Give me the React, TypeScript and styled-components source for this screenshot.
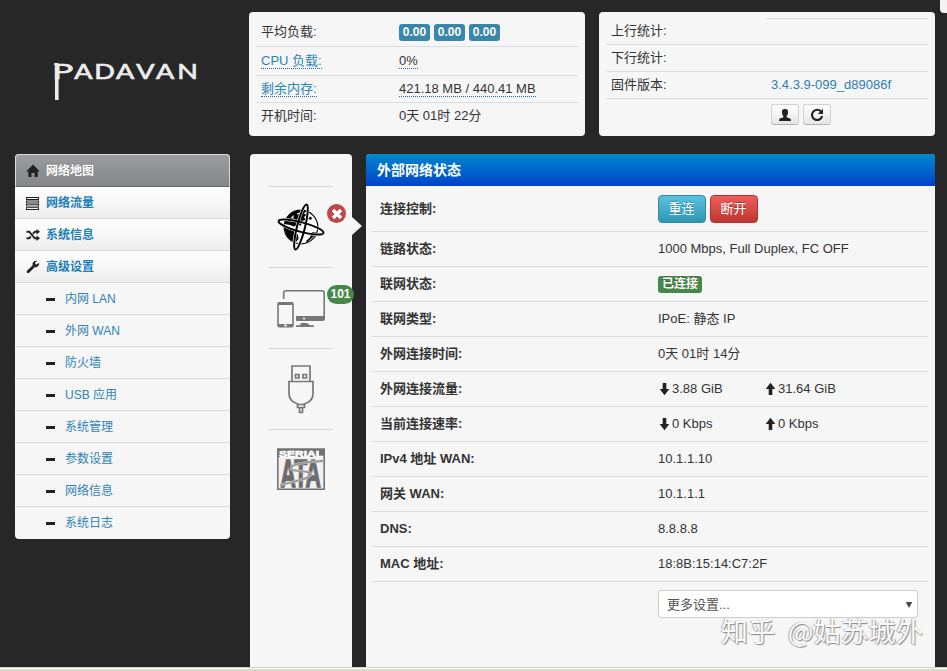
import React from 'react';
import styled, { createGlobalStyle, css } from 'styled-components';

const GlobalStyle = createGlobalStyle`
  * { box-sizing: border-box; }
  html, body { margin: 0; height: 100%; overflow: hidden; background: #272727; }
  body, button {
    font-family: "Liberation Sans", "Noto Sans CJK SC", sans-serif;
    font-size: 13px;
    color: #333;
  }
  button { margin: 0; padding: 0; }
`;

const Page = styled.div`
  position: relative;
  width: 947px;
  height: 671px;
  display: flex;
  flex-direction: column;
  background: #272727;
  overflow: hidden;
`;

const CornerTab = styled.div`
  position: absolute;
  top: 0;
  right: 0;
  width: 7px;
  height: 13px;
  background: #f4f2f2;
  border-bottom-left-radius: 4px;
`;

const Header = styled.header`
  display: grid;
  grid-template-columns: 249px 336px 336px;
  column-gap: 0;
  height: 142px;
  padding-top: 12px;
  & > :last-child { margin-left: 14px; margin-right: -14px; }
`;

const LogoBox = styled.div`
  padding: 42px 0 0 48px;
`;

const Card = styled.section`
  height: 124px;
  padding: 6px 7px 0;
  background: #f6f6f6;
  border-radius: 4px;
`;

const StatRow = styled.div<{ $h: number; $line?: boolean; $label?: number }>`
  display: grid;
  grid-template-columns: ${p => p.$label ?? 138}px 1fr;
  align-items: center;
  height: ${p => p.$h}px;
  padding: 0 0 1px 5px;
  line-height: 16px;
  border-bottom: ${p => (p.$line === false ? 'none' : '1px solid #dcdcdc')};
`;

const TopRule = styled.div`
  height: 1px;
  margin-left: 160px;
  background: #dcdcdc;
`;

const Hint = styled.span<{ $link?: boolean }>`
  display: inline-block;
  height: 17px;
  line-height: 18px;
  color: ${p => (p.$link ? '#2a85b8' : '#333')};
  border-bottom: 1px dotted #27699c;
`;

const Badges = styled.div`
  display: flex;
  gap: 4px;
  padding-top: 1px;
`;

const Badge = styled.span<{ $ok?: boolean }>`
  display: inline-block;
  width: ${p => (p.$ok ? 44 : 31)}px;
  height: 17px;
  text-align: center;
  white-space: nowrap;
  border-radius: 3px;
  color: #fff;
  font-size: 12px;
  font-weight: bold;
  line-height: 17px;
  background: ${p => (p.$ok ? '#468847' : '#3a87ad')};
  text-shadow: 0 -1px 0 rgba(0, 0, 0, 0.25);
`;

const FirmwareLink = styled.a`
  color: #2a80b5;
`;

const IconButtons = styled.div`
  display: flex;
  gap: 4px;
  padding: 5px 0 0 165px;
`;

const IconButton = styled.button`
  display: flex;
  align-items: center;
  justify-content: center;
  width: 28px;
  height: 21px;
  border: 1px solid #d0d0d0;
  border-bottom-color: #b3b3b3;
  border-radius: 3px;
  background: linear-gradient(#fff, #e6e6e6);
  color: #222;
`;

const Body = styled.div`
  flex: 1;
  display: flex;
  padding: 12px 12px 0 15px;
  min-height: 0;
`;

const Sidebar = styled.nav`
  width: 215px;
  height: 385px;
  margin-right: 20px;
  border-radius: 4px;
  overflow: hidden;
  background: #f6f6f6;
`;

const MenuItem = styled.a<{ $active?: boolean }>`
  display: flex;
  align-items: center;
  height: 32px;
  padding: 0 0 0 11px;
  gap: 6px;
  font-size: 12px;
  font-weight: bold;
  color: #1b7fb8;
  background: linear-gradient(#fff, #efeded);
  border-bottom: 1px solid #dcdcdc;
  ${p => p.$active && css`
    height: 33px;
    color: #fff;
    background: linear-gradient(#9a9ca0, #848689);
    border: 1px solid #d8d8d8;
    border-bottom-color: #68696c;
    border-radius: 4px 4px 0 0;
    padding-left: 10px;
    text-shadow: 0 -1px 0 rgba(0, 0, 0, 0.2);
  `}
  svg { width: 14px; height: 14px; color: #222; }
  span { padding-bottom: 2px; }
`;

const SubItem = styled.a`
  display: flex;
  align-items: center;
  height: 32px;
  padding: 0 0 2px 31px;
  gap: 10px;
  font-size: 12px;
  color: #2f83b6;
  border-bottom: 1px solid #dcdcdc;
  &::before { content: ''; width: 9px; height: 3px; margin-top: 3px; background: #222; }
  &:last-child { border-bottom-color: transparent; }
`;

const Strip = styled.div`
  position: relative;
  width: 102px;
  height: 513px;
  margin-right: 14px;
  padding: 32px 19px 0;
  border-radius: 4px 4px 0 0;
  background: #f6f6f6;
`;

const Device = styled.div`
  position: relative;
  height: 81px;
  padding: 16px 0 0 8px;
  border-top: 1px solid #d5d5d5;
  svg { display: block; overflow: visible; }
`;

const Bubble = styled.span<{ $kind: 'error' | 'count' }>`
  position: absolute;
  left: 58px;
  top: 17px;
  display: flex;
  align-items: center;
  justify-content: center;
  width: ${p => (p.$kind === 'error' ? 19 : 27)}px;
  height: 19px;
  padding-bottom: ${p => (p.$kind === 'error' ? 0 : 1)}px;
  border-radius: 10px;
  color: #fff;
  font-size: 12px;
  font-weight: bold;
  background: ${p => (p.$kind === 'error' ? '#b94a48' : '#468847')};
`;

const Pointer = styled.div`
  position: absolute;
  left: 102px;
  top: 63px;
  border: 9px solid transparent;
  border-left: 10px solid #f6f6f6;
  border-right: none;
`;

const Panel = styled.main`
  width: 569px;
  height: 513px;
  background: #f6f6f6;
  border-radius: 4px 4px 0 0;
`;

const PanelTitle = styled.h1`
  height: 32px;
  margin: 0;
  padding-left: 11px;
  border-radius: 4px 4px 0 0;
  font-size: 14px;
  line-height: 32px;
  color: #fff;
  background: linear-gradient(#0088cc, #0044cc);
`;

const Table = styled.div`
  padding: 0 7px 0 6px;
`;

const Row = styled.div<{ $h?: number; $last?: boolean }>`
  display: grid;
  grid-template-columns: 278px 1fr;
  align-items: center;
  height: ${p => p.$h ?? 35}px;
  padding-left: 8px;
  line-height: 18px;
  border-bottom: ${p => (p.$last ? 'none' : '1px solid #dcdcdc')};
`;

const Label = styled.b`
  color: #333;
`;

const Traffic = styled.div`
  display: grid;
  grid-template-columns: 106px 1fr;
`;

const Rate = styled.span`
  display: flex;
  align-items: center;
  gap: 1px;
`;

const Actions = styled.div`
  display: flex;
  gap: 4px;
`;

const ActionButton = styled.button<{ $danger?: boolean }>`
  width: 48px;
  height: 28px;
  padding-right: 1px;
  border: 1px solid ${p => (p.$danger ? '#b5332e' : '#3189a6')};
  border-radius: 4px;
  color: #fff;
  line-height: 24px;
  text-shadow: 0 -1px 0 rgba(0, 0, 0, 0.25);
  background: ${p => (p.$danger ? 'linear-gradient(#ee5f5b, #bd362f)' : 'linear-gradient(#5bc0de, #2f96b4)')};
`;

const Select = styled.div`
  display: flex;
  align-items: center;
  justify-content: space-between;
  width: 260px;
  height: 28px;
  padding: 1px 4px 0 8px;
  border: 1px solid #ccc;
  border-radius: 3px;
  background: #fff;
  color: #555;
`;

const Watermark = styled.div`
  position: absolute;
  left: 721px;
  top: 611px;
  font-family: "Noto Sans CJK SC", sans-serif;
  font-size: 27px;
  line-height: 40px;
  word-spacing: 6px;
  letter-spacing: 0.3px;
  white-space: nowrap;
  color: #fafafa;
  text-shadow: 1px 1px 1px #888, -1px 0 1px #aaa;
`;

const StatusEdge = styled.footer`
  height: 4px;
  flex: none;
  border-top: 1px solid #cfd0c6;
  background: linear-gradient(#fff 1px, #d8d8cc 1px);
`;

const Logo = () => (
  <svg
    width="160"
    height="52"
    viewBox="48 54 160 52"
    fill="#ececec"
    stroke="#ececec"
    strokeWidth="0.7"
    fontFamily="Lato, sans-serif"
    fontSize="21.6"
  >
    <text transform="translate(52.2 79) scale(1.62 1)">P</text>
    <text transform="scale(1.25 1)" y="79" x="59.5 75.4 92.9 109 124.9 141.9">ADAVAN</text>
    <g stroke="none">
      <rect x="55" y="63.2" width="3.6" height="36.8" />
      <rect x="54" y="63.2" width="4" height="1.8" />
    </g>
  </svg>
);

const UserIcon = () => (
  <svg width="14" height="14" viewBox="0 0 14 14" fill="currentColor">
    <path d="M7 1C4.3 1 3.8 2.5 4 4.5 4 6.2 4.7 7.4 5.4 8V9.3L2 10.6Q1 11 1 13H13Q13 11 12 10.6L8.6 9.3V8C9.3 7.4 10 6.2 10 4.5 10.2 2.5 9.7 1 7 1Z" />
  </svg>
);

const ReloadIcon = () => (
  <svg width="14" height="14" viewBox="0 0 14 14">
    <path d="M11 3.6A5.1 5.1 0 1 0 12.1 8" fill="none" stroke="currentColor" strokeWidth="2.1" />
    <path d="M13 .8V6H7.8Z" fill="currentColor" />
  </svg>
);

const HomeIcon = () => (
  <svg viewBox="0 0 14 14" fill="currentColor">
    <path d="M7 .5 13.8 7.5H11.8V13H8.6V9H5.5V13H2.3V7.5H.2Z" />
  </svg>
);

const ListIcon = () => (
  <svg viewBox="0 0 14 14" fill="currentColor">
    <path fillRule="evenodd" d="M0 1H13V4H0ZM0 4.6H13V7.4H0ZM0 8H13V10.6H0ZM0 11.2H13V14H0ZM1 2V3H12V2ZM1 5.5V6.5H12V5.5ZM1 8.8V9.8H12V8.8ZM1 12V13H12V12Z" />
  </svg>
);

const ShuffleIcon = () => (
  <svg viewBox="0 0 14 14" fill="none" stroke="currentColor" strokeWidth="1.9">
    <path d="M.5 3.7H3.2L8.8 10.3H11M.5 10.3H3.2L4.8 8.5M6.9 5.8 8.8 3.7H11" />
    <path d="M10.5 1 14 3.7 10.5 6.4ZM10.5 7.6 14 10.3 10.5 13Z" fill="currentColor" stroke="none" />
  </svg>
);

const WrenchIcon = () => (
  <svg viewBox="0 0 14 14" fill="currentColor">
    <path d="M13 2.8 10.9 4.5 9.4 3.9 9.2 2.5 11.2 .9C9.4.4 7.5 1.2 6.8 2.7 6.4 3.6 6.4 4.4 6.7 5.2L1.2 10.6C.6 11.2.6 12.1 1.1 12.7S2.6 13.3 3.2 12.7L8.6 7.2C11 7.8 13.8 5.8 13 2.8Z" />
  </svg>
);

const Arrow = ({ up }: { up?: boolean }) => (
  <svg width="13" height="14" viewBox="0 0 13 14" fill="#222">
    {up ? <path d="M6.5 .8 11.3 7H8.3V13H4.7V7H1.7Z" /> : <path d="M6.5 13.2 11.3 7H8.3V1H4.7V7H1.7Z" />}
  </svg>
);

const GlobeIcon = () => (
  <svg width="48" height="48" viewBox="0 0 48 48">
    <circle cx="24" cy="24" r="16.8" fill="#fafafa" stroke="#050505" strokeWidth="1.2" />
    <path d="M7.4 21C8 12 16 6.8 24 7.2L29 8.2 27 10.5 29.5 12 27 14 28.5 17 25 18 24 22.5 20 22 17 23.5 13 22ZM7.3 24 13 27 17 27.5 21 32 21.5 36 18.5 39.6Q8 36 7.3 24Z" fill="#050505" />
    <path d="M35 29 39 29.5 36 34 30 39.5 29 38 33 34.5ZM31 15 34 13.5 35 16 33 17Z" fill="#050505" />
    <path d="M14 14.5 17 12 16.2 16.5ZM20 10 23.5 9.8 20.5 12ZM19 18 22 15.5 22 18Z" fill="#e5e5e5" />
    <g fill="none" stroke="#fafafa" strokeWidth="3">
      <ellipse cx="24" cy="24" rx="23.2" ry="4.8" transform="rotate(15 24 24)" />
      <ellipse cx="24" cy="24" rx="4" ry="23.2" transform="rotate(14 24 24)" />
    </g>
    <g fill="none" stroke="#050505" strokeWidth="2">
      <ellipse cx="24" cy="24" rx="23.2" ry="4.8" transform="rotate(15 24 24)" />
      <ellipse cx="24" cy="24" rx="4" ry="23.2" transform="rotate(14 24 24)" />
    </g>
  </svg>
);

const DevicesIcon = () => (
  <svg width="48" height="48" viewBox="0 0 48 48" fill="#777">
    <path d="M6.7 15V9Q6.7 6.7 9 6.7H45Q47.2 6.7 47.2 9V34" fill="none" stroke="#777" strokeWidth="1.6" />
    <path d="M19 32H48V35Q48 37 46 37H19ZM24 39H30L33 41.3H37V43H19V41.3H23Z" />
    <rect x="1" y="18.7" width="15" height="24" rx="1.5" fill="#f6f6f6" stroke="#777" strokeWidth="1.6" />
    <path d="M1 18.5H16V21H1ZM1 40H16V43H1Z" />
    <circle cx="8.5" cy="41.4" r="1.2" fill="#f6f6f6" />
    <circle cx="27" cy="34.5" r="1.1" fill="#f6f6f6" />
  </svg>
);

const UsbIcon = () => (
  <svg width="48" height="48" viewBox="0 0 48 48" fill="none" stroke="#777" strokeWidth="1.7">
    <path d="M15 16V1H33V16M12 16.5H36V29Q36 36.5 26 39.5H22Q12 36.5 12 29ZM20.5 39.5V42.5H27.5V39.5M22.5 43V47.5H25.5V43" />
    <path d="M18.5 9.5H22V13H18.5ZM26 9.5H29.5V13H26Z" />
  </svg>
);

const SataIcon = () => (
  <svg width="48" height="48" viewBox="0 0 48 48">
    <path d="M.8 3H47.2V43.2H.8Z" fill="#f1f1f1" stroke="#737373" strokeWidth="1.6" />
    <rect x="1" y="3" width="46" height="8" fill="#737373" />
    <text x="2" y="10.6" textLength="44" lengthAdjust="spacingAndGlyphs" fontSize="9.6" fontWeight="bold" fill="#fff" stroke="#fff" strokeWidth=".6">SERIAL</text>
    <text transform="translate(3.5 41) scale(.73 1.32)" fontSize="29" fontWeight="bold" fill="#6c6c6c" stroke="#6c6c6c" strokeWidth="1.2">ATA</text>
    <path d="M46 15C28 16 13 18 14 23 15 26 34 24 34 28 34 33 18 35 3 39" fill="none" stroke="#ddd" strokeWidth="2.4" />
    <path d="M46 15C28 16 13 18 14 23 15 26 34 24 34 28 34 33 18 35 3 39" fill="none" stroke="#989898" strokeWidth="1.8" />
  </svg>
);

const CrossIcon = () => (
  <svg width="12" height="12" viewBox="0 0 12 12">
    <path d="M2 2 10 10M10 2 2 10" stroke="#fff" strokeWidth="3.4" />
  </svg>
);

const menu = [
  { text: '网络地图', Icon: HomeIcon, active: true },
  { text: '网络流量', Icon: ListIcon },
  { text: '系统信息', Icon: ShuffleIcon },
  { text: '高级设置', Icon: WrenchIcon },
];
const submenu = ['内网 LAN', '外网 WAN', '防火墙', 'USB 应用', '系统管理', '参数设置', '网络信息', '系统日志'];

const TrafficValue = ({ down, up }: { down: string; up: string }) => (
  <Traffic>
    <Rate><Arrow />{down}</Rate>
    <Rate><Arrow up />{up}</Rate>
  </Traffic>
);

const status: { label: string; value: React.ReactNode }[] = [
  { label: '链路状态:', value: '1000 Mbps, Full Duplex, FC OFF' },
  { label: '联网状态:', value: <Badge $ok>已连接</Badge> },
  { label: '联网类型:', value: 'IPoE: 静态 IP' },
  { label: '外网连接时间:', value: '0天 01时 14分' },
  { label: '外网连接流量:', value: <TrafficValue down="3.88 GiB" up="31.64 GiB" /> },
  { label: '当前连接速率:', value: <TrafficValue down="0 Kbps" up="0 Kbps" /> },
  { label: 'IPv4 地址 WAN:', value: '10.1.1.10' },
  { label: '网关 WAN:', value: '10.1.1.1' },
  { label: 'DNS:', value: '8.8.8.8' },
  { label: 'MAC 地址:', value: '18:8B:15:14:C7:2F' },
];

export default function App() {
  return (
    <Page>
      <GlobalStyle />
      <CornerTab />
      <Header>
        <LogoBox><Logo /></LogoBox>
        <Card>
          <StatRow $h={29}>
            <span>平均负载:</span>
            <Badges><Badge>0.00</Badge><Badge>0.00</Badge><Badge>0.00</Badge></Badges>
          </StatRow>
          <StatRow $h={29}>
            <span><Hint $link>CPU 负载:</Hint></span>
            <span><Hint>0%</Hint></span>
          </StatRow>
          <StatRow $h={27}>
            <span><Hint $link>剩余内存:</Hint></span>
            <span><Hint>421.18 MB / 440.41 MB</Hint></span>
          </StatRow>
          <StatRow $h={26} $line={false}>
            <span>开机时间:</span>
            <span>0天 01时 22分</span>
          </StatRow>
        </Card>
        <Card>
          <TopRule />
          <StatRow $h={26} $label={160}><span>上行统计:</span></StatRow>
          <StatRow $h={27} $label={160}><span>下行统计:</span></StatRow>
          <StatRow $h={27} $label={160}>
            <span>固件版本:</span>
            <FirmwareLink>3.4.3.9-099_d89086f</FirmwareLink>
          </StatRow>
          <IconButtons>
            <IconButton><UserIcon /></IconButton>
            <IconButton><ReloadIcon /></IconButton>
          </IconButtons>
        </Card>
      </Header>
      <Body>
        <Sidebar>
          {menu.map(({ text, Icon, active }) => (
            <MenuItem key={text} $active={active}><Icon /><span>{text}</span></MenuItem>
          ))}
          {submenu.map(text => <SubItem key={text}>{text}</SubItem>)}
        </Sidebar>
        <Strip>
          <Device><GlobeIcon /><Bubble $kind="error"><CrossIcon /></Bubble></Device>
          <Device><DevicesIcon /><Bubble $kind="count">101</Bubble></Device>
          <Device><UsbIcon /></Device>
          <Device><SataIcon /></Device>
          <Pointer />
        </Strip>
        <Panel>
          <PanelTitle>外部网络状态</PanelTitle>
          <Table>
            <Row $h={46}>
              <Label>连接控制:</Label>
              <Actions>
                <ActionButton>重连</ActionButton>
                <ActionButton $danger>断开</ActionButton>
              </Actions>
            </Row>
            {status.map(({ label, value }) => (
              <Row key={label}><Label>{label}</Label><div>{value}</div></Row>
            ))}
            <Row $h={44} $last>
              <span />
              <Select>
                <span>更多设置...</span>
                <svg width="8" height="8" viewBox="0 0 8 8"><path d="M.8 1H7.2L4 7Z" fill="#444" /></svg>
              </Select>
            </Row>
          </Table>
        </Panel>
      </Body>
      <StatusEdge />
      <Watermark>知乎 @姑苏城外</Watermark>
    </Page>
  );
}
